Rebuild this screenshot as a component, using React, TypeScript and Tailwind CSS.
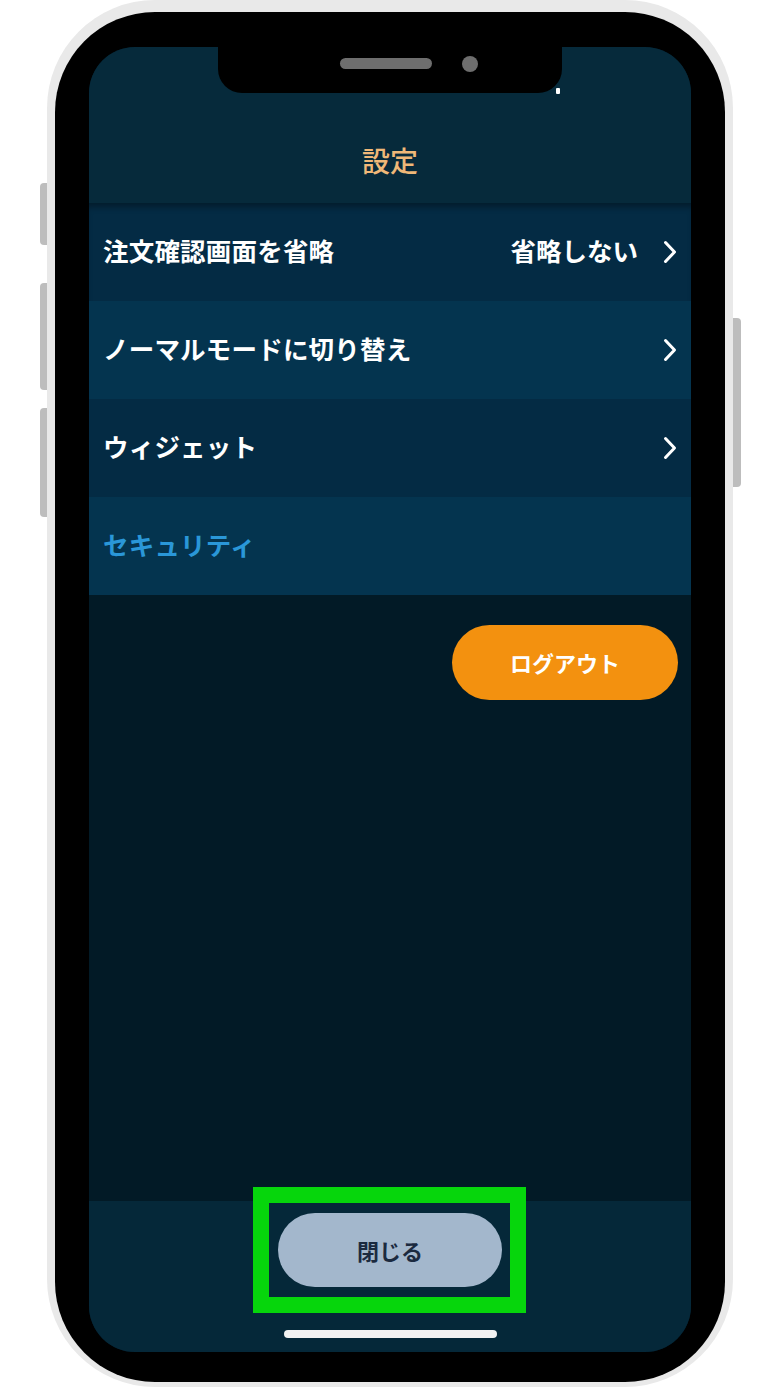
const jp = { fontFamily: '"Noto Sans CJK JP", "Noto Sans", sans-serif' };

function Chevron() {
  return (
    <svg width="14" height="24" viewBox="0 0 14 24" fill="none" className="shrink-0">
      <polyline points="2.5,2.5 11.5,12 2.5,21.5" stroke="#ffffff" strokeWidth="3" strokeLinecap="round" strokeLinejoin="round" />
    </svg>
  );
}

type RowProps = { label: string; value?: string; tone: 'dark' | 'light'; accent?: boolean; arrow?: boolean; first?: boolean };

function SettingRow({ label, value, tone, accent, arrow = true, first }: RowProps) {
  return (
    <div
      className={`h-[98px] flex items-center px-[14px] ${tone === 'dark' ? 'bg-[#042b44]' : 'bg-[#04344f]'} ${first ? 'shadow-[inset_0_7px_6px_-3px_rgba(0,0,0,0.35)]' : ''}`}
    >
      <span className={`text-[25.5px] leading-[32px] pb-[5px] font-semibold tracking-[0.2px] ${accent ? 'text-[#2a97d8]' : 'text-white'}`}>{label}</span>
      <div className="flex-1" />
      {value && <span className="text-[25.5px] leading-[32px] pb-[5px] font-semibold text-white mr-[25px]">{value}</span>}
      {arrow && <Chevron />}
    </div>
  );
}

export default function App() {
  return (
    <div className="w-[780px] h-[1387px] bg-white overflow-hidden" style={jp}>
      {/* phone shell */}
      <div className="relative ml-[47px] w-[686px] h-[1387px] bg-[#e9e9e9] rounded-[108px] pt-[12px] px-[8px] pb-[5px]">
        {/* hardware buttons */}
        <div className="absolute left-[-7px] top-[183px] w-[7px] h-[62px] bg-[#bdbdbd] rounded-l-[4px]" />
        <div className="absolute left-[-7px] top-[283px] w-[7px] h-[107px] bg-[#bdbdbd] rounded-l-[4px]" />
        <div className="absolute left-[-7px] top-[408px] w-[7px] h-[109px] bg-[#bdbdbd] rounded-l-[4px]" />
        <div className="absolute right-[-8px] top-[318px] w-[8px] h-[169px] bg-[#bdbdbd] rounded-r-[4px]" />

        {/* black body */}
        <div className="w-full h-full bg-black rounded-[100px] pt-[35px] px-[34px] pb-[30px]">
          {/* screen */}
          <div className="relative w-full h-full rounded-[46px] overflow-hidden flex flex-col bg-[#021a26]">
            {/* notch */}
            <div className="absolute left-[129px] top-0 w-[344px] h-[46px] bg-black rounded-b-[24px]">
              <div className="absolute left-[122px] top-[11px] w-[92px] h-[11px] rounded-full bg-[#6e6e6e]" />
              <div className="absolute left-[244px] top-[9px] w-[16px] h-[16px] rounded-full bg-[#6e6e6e]" />
            </div>
            <div className="absolute left-[467px] top-[41px] w-[4px] h-[6px] rounded-[1px] bg-white" />

            {/* header */}
            <div className="h-[156px] shrink-0 bg-[#062a3b] flex justify-center pt-[95px]">
              <span className="text-[28px] leading-[36px] font-medium text-[#efb878]">設定</span>
            </div>

            {/* settings list */}
            <SettingRow label="注文確認画面を省略" value="省略しない" tone="dark" first />
            <SettingRow label="ノーマルモードに切り替え" tone="light" />
            <SettingRow label="ウィジェット" tone="dark" />
            <SettingRow label="セキュリティ" tone="light" accent arrow={false} />

            {/* body */}
            <div className="flex-1 bg-[#021a26] flex justify-end items-start pt-[30px] pr-[13px]">
              <button className="w-[226px] h-[75px] rounded-full bg-[#f3910f] text-white text-[22px] font-semibold">
                ログアウト
              </button>
            </div>

            {/* footer */}
            <div className="h-[151px] shrink-0 bg-[#052839] flex flex-col items-center pt-[12px]">
              <div className="relative">
                <div className="absolute left-[-25px] right-[-24px] top-[-26px] bottom-[-26px] border-[16px] border-[#06d60c]" />
                <button className="relative w-[224px] h-[74px] rounded-full bg-[#a3b7cc] text-[#1b2a3f] text-[22px] font-semibold">
                  閉じる
                </button>
              </div>
              <div className="mt-[43px] w-[213px] h-[8px] rounded-full bg-[#f2f2f2]" />
            </div>
          </div>
        </div>
      </div>
    </div>
  );
}
